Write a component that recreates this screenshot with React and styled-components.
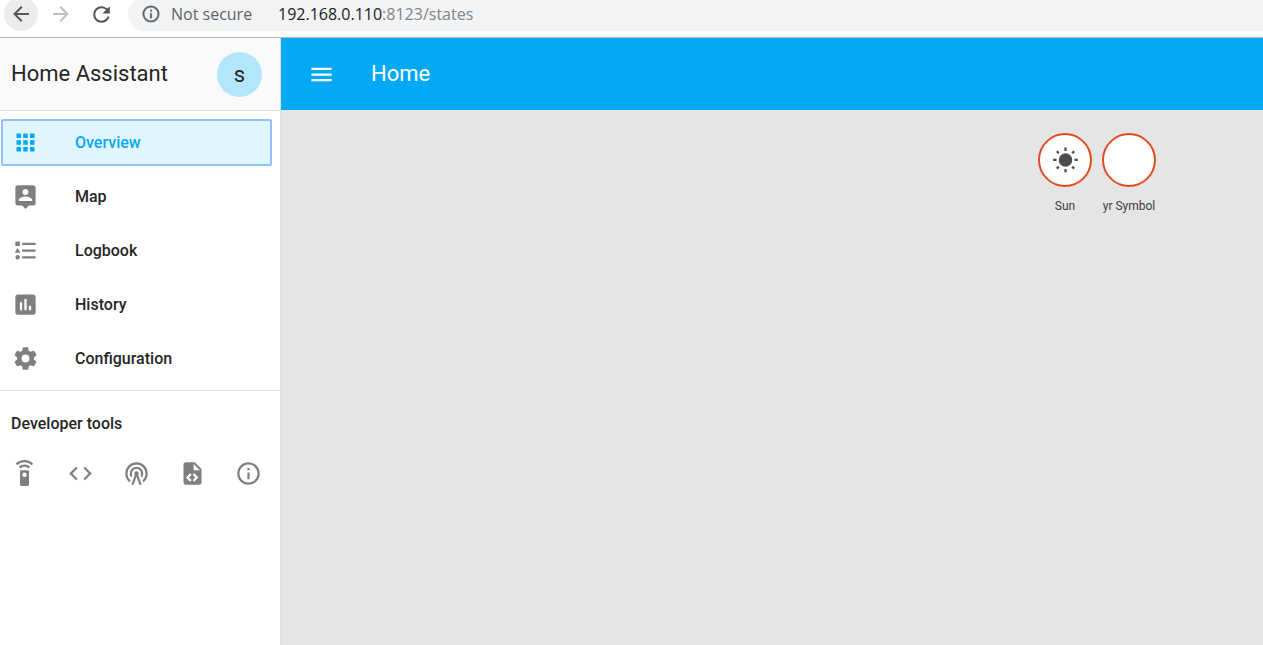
import styled, { createGlobalStyle } from 'styled-components';

const PATHS = {
  back: "M20,11V13H8L13.5,18.5L12.08,19.92L4.16,12L12.08,4.08L13.5,5.5L8,11H20Z",
  forward: "M4,11V13H16L10.5,18.5L11.92,19.92L19.84,12L11.92,4.08L10.5,5.5L16,11H4Z",
  reload: "M17.65,6.35C16.2,4.9 14.21,4 12,4A8,8 0 0,0 4,12A8,8 0 0,0 12,20C15.73,20 18.84,17.45 19.73,14H17.65C16.83,16.33 14.61,18 12,18A6,6 0 0,1 6,12A6,6 0 0,1 12,6C13.66,6 15.14,6.69 16.22,7.78L13,11H20V4L17.65,6.35Z",
  menu: "M3,6H21V8H3V6M3,11H21V13H3V11M3,16H21V18H3V16Z",
  apps: "M16,20H20V16H16M16,14H20V10H16M10,8H14V4H10M16,8H20V4H16M10,14H14V10H10M4,14H8V10H4M4,20H8V16H4M10,20H14V16H10M4,8H8V4H4V8Z",
  map: "M18,16H6V15.1C6,13.1 10,12 12,12C14,12 18,13.1 18,15.1M12,5.3C13.5,5.3 14.7,6.5 14.7,8C14.7,9.5 13.5,10.7 12,10.7C10.5,10.7 9.3,9.5 9.3,8C9.3,6.5 10.5,5.3 12,5.3M19,2H5C3.89,2 3,2.89 3,4V18A2,2 0 0,0 5,20H9L12,23L15,20H19A2,2 0 0,0 21,18V4C21,2.89 20.1,2 19,2Z",
  logbook: "M5,9.5L7.5,14H2.5L5,9.5M3,4H7V8H3V4M5,20A2,2 0 0,0 7,18A2,2 0 0,0 5,16A2,2 0 0,0 3,18A2,2 0 0,0 5,20M9,5V7H21V5H9M9,19H21V17H9V19M9,13H21V11H9V13Z",
  history: "M17,17H15V13H17M13,17H11V7H13M9,17H7V10H9M19,3H5C3.89,3 3,3.89 3,5V19A2,2 0 0,0 5,21H19A2,2 0 0,0 21,19V5C21,3.89 20.1,3 19,3Z",
  settings: "M12,15.5A3.5,3.5 0 0,1 8.5,12A3.5,3.5 0 0,1 12,8.5A3.5,3.5 0 0,1 15.5,12A3.5,3.5 0 0,1 12,15.5M19.43,12.97C19.47,12.65 19.5,12.33 19.5,12C19.5,11.67 19.47,11.34 19.43,11L21.54,9.37C21.73,9.22 21.78,8.95 21.66,8.73L19.66,5.27C19.54,5.05 19.27,4.96 19.05,5.05L16.56,6.05C16.04,5.66 15.5,5.32 14.87,5.07L14.5,2.42C14.46,2.18 14.25,2 14,2H10C9.75,2 9.54,2.18 9.5,2.42L9.13,5.07C8.5,5.32 7.96,5.66 7.44,6.05L4.95,5.05C4.73,4.96 4.46,5.05 4.34,5.27L2.34,8.73C2.21,8.95 2.27,9.22 2.46,9.37L4.57,11C4.53,11.34 4.5,11.67 4.5,12C4.5,12.33 4.53,12.65 4.57,12.97L2.46,14.63C2.27,14.78 2.21,15.05 2.34,15.27L4.34,18.73C4.46,18.95 4.73,19.03 4.95,18.95L7.44,17.94C7.96,18.34 8.5,18.68 9.13,18.93L9.5,21.58C9.54,21.82 9.75,22 10,22H14C14.25,22 14.46,21.82 14.5,21.58L14.87,18.93C15.5,18.67 16.04,18.34 16.56,17.94L19.05,18.95C19.27,19.03 19.54,18.95 19.66,18.73L21.66,15.27C21.78,15.05 21.73,14.78 21.54,14.63L19.43,12.97Z",
  remote: "M12,0C8.96,0 6.21,1.23 4.22,3.22L5.63,4.63C7.26,3 9.5,2 12,2C14.5,2 16.74,3 18.36,4.64L19.77,3.23C17.79,1.23 15.04,0 12,0M7.05,6.05L8.46,7.46C9.37,6.56 10.62,6 12,6C13.38,6 14.63,6.56 15.54,7.46L16.95,6.05C15.68,4.78 13.93,4 12,4C10.07,4 8.32,4.78 7.05,6.05M12,15A2,2 0 0,1 10,13A2,2 0 0,1 12,11A2,2 0 0,1 14,13A2,2 0 0,1 12,15M15,9H9A1,1 0 0,0 8,10V22A1,1 0 0,0 9,23H15A1,1 0 0,0 16,22V10A1,1 0 0,0 15,9Z",
  code: "M14.6,16.6L19.2,12L14.6,7.4L16,6L22,12L16,18L14.6,16.6M9.4,16.6L4.8,12L9.4,7.4L8,6L2,12L8,18L9.4,16.6Z",
  radio: "M12,10A2,2 0 0,1 14,12C14,12.5 13.82,12.94 13.53,13.29L16.7,22H14.57L12,14.93L9.43,22H7.3L10.47,13.29C10.18,12.94 10,12.5 10,12A2,2 0 0,1 12,10M12,8A4,4 0 0,0 8,12C8,12.5 8.1,13 8.28,13.46L7.4,15.86C6.53,14.81 6,13.47 6,12A6,6 0 0,1 12,6A6,6 0 0,1 18,12C18,13.47 17.47,14.81 16.6,15.86L15.72,13.46C15.9,13 16,12.5 16,12A4,4 0 0,0 12,8M12,4A8,8 0 0,0 4,12C4,14.36 5,16.5 6.64,17.94L5.92,19.94C3.54,18.11 2,15.23 2,12A10,10 0 0,1 12,2A10,10 0 0,1 22,12C22,15.23 20.46,18.11 18.08,19.94L17.36,17.94C19,16.5 20,14.36 20,12A8,8 0 0,0 12,4Z",
  template: "M13,9H18.5L13,3.5V9M6,2H14L20,8V20A2,2 0 0,1 18,22H6C4.89,22 4,21.1 4,20V4C4,2.89 4.89,2 6,2M6.12,15.5L9.86,19.24L11.28,17.83L8.95,15.5L11.28,13.17L9.86,11.76L6.12,15.5M17.28,15.5L13.54,11.76L12.12,13.17L14.45,15.5L12.12,17.83L13.54,19.24L17.28,15.5Z",
  info: "M11,9H13V7H11M12,20C7.59,20 4,16.41 4,12C4,7.59 7.59,4 12,4C16.41,4 20,7.59 20,12C20,16.41 16.41,20 12,20M12,2A10,10 0 0,0 2,12A10,10 0 0,0 12,22A10,10 0 0,0 22,12A10,10 0 0,0 12,2M11,17H13V11H11V17Z",
  sun: "M3.55,18.54L4.96,19.95L6.76,18.16L5.34,16.74M11,22.45C11.32,22.45 13,22.45 13,22.45V19.5H11M12,5.5A6,6 0 0,0 6,11.5A6,6 0 0,0 12,17.5A6,6 0 0,0 18,11.5C18,8.18 15.31,5.5 12,5.5M20,12.5H23V10.5H20M17.24,18.16L19.04,19.95L20.45,18.54L18.66,16.74M20.45,4.46L19.04,3.05L17.24,4.84L18.66,6.26M13,0.55H11V3.5H13M4,10.5H1V12.5H4M6.76,4.84L4.96,3.05L3.55,4.46L5.34,6.26L6.76,4.84Z",
};

const MENU = [
  { icon: "apps", label: "Overview", active: true },
  { icon: "map", label: "Map" },
  { icon: "logbook", label: "Logbook" },
  { icon: "history", label: "History" },
  { icon: "settings", label: "Configuration" },
];

const TOOLS = [
  { icon: "remote", label: "Services" },
  { icon: "code", label: "States" },
  { icon: "radio", label: "Events" },
  { icon: "template", label: "Templates" },
  { icon: "info", label: "Info" },
];

const Icon = ({ name, size = 27 }) => (
  <Svg width={size} height={size} viewBox="0 0 24 24" strokeWidth={name === "info" && size === 20 ? "0.4" : "0"} aria-hidden="true">
    <path d={PATHS[name]} />
  </Svg>
);

const App = () => {
  return (
    <>
      <GlobalStyle />
      <Page>
        <BrowserBar>
          <NavButton aria-label="Back" $hover><Icon name="back" size={24} /></NavButton>
          <NavButton aria-label="Forward" $color="#bcbec0"><Icon name="forward" size={24} /></NavButton>
          <NavButton aria-label="Reload"><Icon name="reload" size={25} /></NavButton>
          <AddressBar>
            <Icon name="info" size={20} />
            <Security>Not secure</Security>
            <Url>192.168.0.110<UrlPath>:8123/states</UrlPath></Url>
          </AddressBar>
        </BrowserBar>
        <Layout>
          <Sidebar>
            <SidebarHeader>
              <Title>Home Assistant</Title>
              <Avatar aria-label="User profile">s</Avatar>
            </SidebarHeader>
            <Menu>
              {MENU.map(item => (
                <MenuItem key={item.label} href="#" $active={item.active}>
                  <Icon name={item.icon} />
                  <MenuLabel $active={item.active}>{item.label}</MenuLabel>
                </MenuItem>
              ))}
            </Menu>
            <Subheader>Developer tools</Subheader>
            <Tools>
              {TOOLS.map(tool => (
                <ToolLink key={tool.label} href="#" aria-label={tool.label}>
                  <Icon name={tool.icon} />
                </ToolLink>
              ))}
            </Tools>
          </Sidebar>
          <Main>
            <Toolbar>
              <MenuButton aria-label="Toggle menu"><Icon name="menu" /></MenuButton>
              <Title>Home</Title>
            </Toolbar>
            <Badges>
              <Badge>
                <Circle><Icon name="sun" /></Circle>
                <BadgeLabel>Sun</BadgeLabel>
              </Badge>
              <Badge>
                <Circle />
                <BadgeLabel>yr Symbol</BadgeLabel>
              </Badge>
            </Badges>
          </Main>
        </Layout>
      </Page>
    </>
  );
};

export default App;

const GlobalStyle = createGlobalStyle`
  * {
    box-sizing: border-box;
  }
  body {
    margin: 0;
    font-family: Roboto, "Noto Sans", sans-serif;
    color: #262626;
    background: #ffffff;
  }
  button {
    border: none;
    padding: 0;
    font: inherit;
    color: inherit;
    background: none;
  }
`

const Svg = styled.svg`
  display: block;
  flex-shrink: 0;
  fill: currentColor;
  stroke: currentColor;
`

const Page = styled.div`
  display: flex;
  flex-direction: column;
  min-height: 100vh;
`

const BrowserBar = styled.header`
  display: flex;
  align-items: flex-end;
  gap: 6px;
  height: 38px;
  padding: 0 0 6px 4px;
  overflow: hidden;
  border-bottom: 1px solid #b3b4b5;
`

const NavButton = styled.button`
  display: flex;
  align-items: center;
  justify-content: center;
  flex-shrink: 0;
  width: 34px;
  height: 34px;
  border-radius: 50%;
  color: ${props => props.$color || "#54575b"};
  background: ${props => props.$hover ? "#ececed" : "transparent"};
`

const AddressBar = styled.div`
  display: flex;
  align-items: center;
  flex: 1;
  height: 34px;
  margin-left: 4px;
  padding-left: 13px;
  border-radius: 17px 0 0 17px;
  color: #5f6368;
  background: #f1f3f4;
  font-family: "Open Sans", "Noto Sans", sans-serif;
  font-size: 16px;
  line-height: 20px;
  white-space: nowrap;
`

const Security = styled.span`
  width: 117px;
  padding-left: 10px;
`

const Url = styled.span`
  color: #202124;
`

const UrlPath = styled.span`
  color: #80868b;
`

const Layout = styled.div`
  display: flex;
  flex: 1;
`

const Sidebar = styled.aside`
  flex: 0 0 281px;
  border-right: 1px solid #e0e0e0;
  background: #ffffff;
`

const SidebarHeader = styled.div`
  display: flex;
  align-items: center;
  justify-content: space-between;
  height: 73px;
  padding: 0 18px 0 11px;
  border-bottom: 1px solid #e0e0e0;
  background: #fafafa;
`

const Title = styled.h1`
  margin: 0;
  font-size: 22px;
  font-weight: 400;
  line-height: 28px;
`

const Avatar = styled.button`
  width: 45px;
  height: 45px;
  border-radius: 50%;
  background: #b3e5fc;
  font-size: 22px;
`

const Menu = styled.nav`
  display: flex;
  flex-direction: column;
  gap: 7px;
  padding: 8px 8px 8px 1px;
  border-bottom: 1px solid #e0e0e0;
`

const MenuItem = styled.a`
  display: flex;
  align-items: center;
  gap: 36px;
  height: 47px;
  padding-left: 9px;
  border: 2px solid ${props => props.$active ? "#93c1fc" : "transparent"};
  border-radius: 2px;
  color: ${props => props.$active ? "#03a9f4" : "#7f7f7f"};
  background: ${props => props.$active ? "#e1f5fe" : "transparent"};
  text-decoration: none;
`

const MenuLabel = styled.span`
  color: ${props => props.$active ? "#03a9f4" : "#262626"};
  font-size: 16px;
  font-weight: 500;
`

const Subheader = styled.h2`
  margin: 0;
  padding: 24px 11px 18px;
  font-size: 16px;
  font-weight: 500;
  line-height: 18px;
`

const Tools = styled.div`
  display: flex;
  gap: 11px;
  padding: 0 2px;
`

const ToolLink = styled.a`
  display: flex;
  align-items: center;
  justify-content: center;
  width: 45px;
  height: 45px;
  color: #7f7f7f;
`

const Main = styled.main`
  flex: 1;
  background: #e5e5e5;
`

const Toolbar = styled.div`
  display: flex;
  align-items: center;
  gap: 27px;
  height: 72px;
  padding-left: 18px;
  color: #ffffff;
  background: #03a9f4;
`

const MenuButton = styled.button`
  display: flex;
  align-items: center;
  justify-content: center;
  width: 45px;
  height: 45px;
`

const Badges = styled.div`
  display: flex;
  justify-content: flex-end;
  gap: 10px;
  padding: 23px 107px 0 0;
`

const Badge = styled.div`
  display: flex;
  flex-direction: column;
  align-items: center;
  gap: 12px;
  width: 54px;
`

const Circle = styled.div`
  display: flex;
  align-items: center;
  justify-content: center;
  width: 54px;
  height: 54px;
  border: 2px solid #df4c1e;
  border-radius: 50%;
  color: #4c4c4c;
  background: #ffffff;
`

const BadgeLabel = styled.span`
  color: #3c3c3c;
  font-size: 12px;
  line-height: 14px;
  white-space: nowrap;
`
